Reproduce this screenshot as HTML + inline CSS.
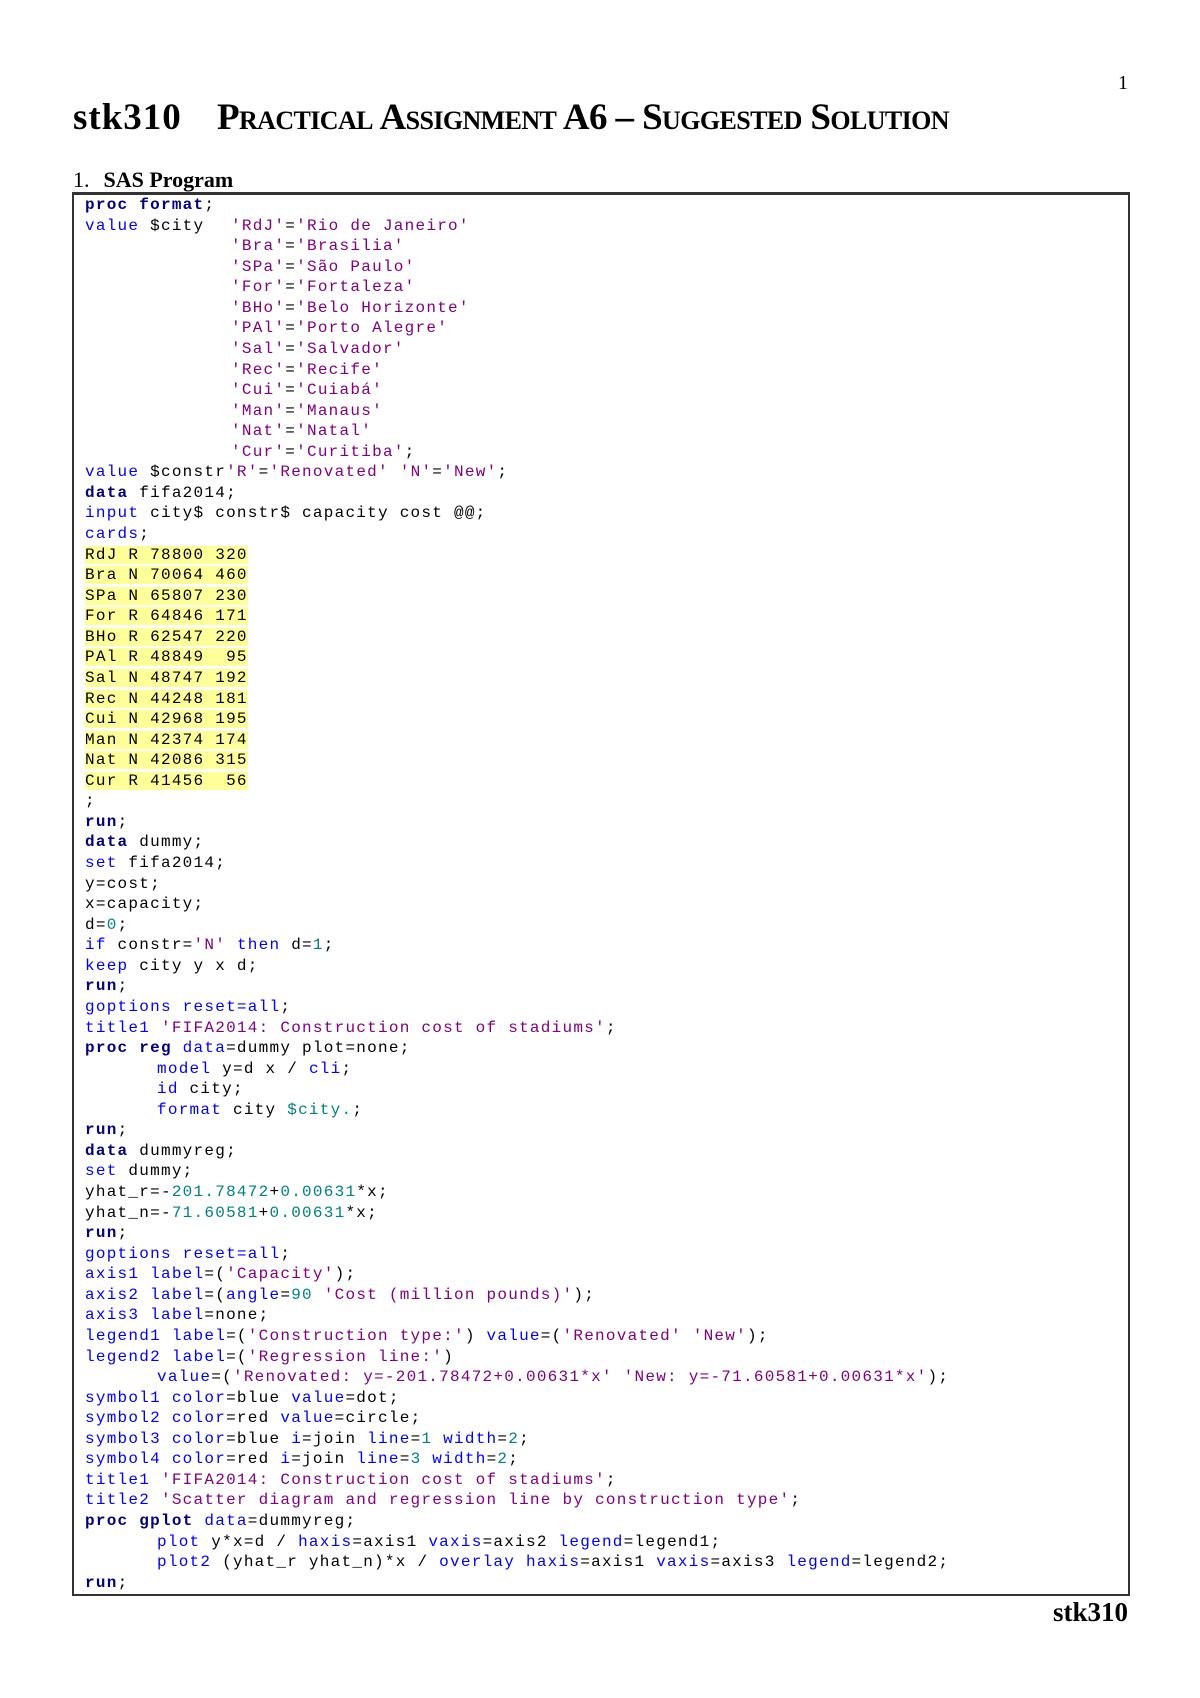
<!DOCTYPE html>
<html><head><meta charset="utf-8"><style>
body{margin:0;background:#fff;width:1200px;height:1698px;position:relative;overflow:hidden;font-family:"Liberation Serif",serif;color:#000}
.pn{position:absolute;left:1118px;top:72px;font-size:20px}
.title{position:absolute;left:73px;top:96px;font-size:37px;font-weight:bold;white-space:nowrap}
.title .st{letter-spacing:1px}
.title .sc{font-variant:small-caps;position:absolute;left:144px;top:0;letter-spacing:-0.6px}
.h1{position:absolute;left:73px;top:167px;font-size:22px;font-weight:bold}
.h1 span{font-weight:normal;margin-right:14px}
.box{position:absolute;left:72px;top:192px;width:1054px;height:1399px;border:2px solid #333;border-top-width:3px}
pre{margin:0;position:absolute;left:11px;top:0;font-family:"Liberation Mono",monospace;font-size:16px;letter-spacing:1.25px;line-height:20.57px;color:#000}
.k{color:#000080;font-weight:bold}
.b{color:#0000ff}
.s{color:#800080}
.n{color:#008080}
.y{background:#ffff99}
.c{display:inline-block;width:146px}
.i{display:inline-block;width:72px}
.ft{position:absolute;right:72px;top:1597px;font-size:27px;font-weight:bold}
</style></head><body>
<div class="pn">1</div>
<div class="title"><span class="st">stk310</span><span class="sc">Practical Assignment A6 – Suggested Solution</span></div>
<div class="h1"><span>1.</span>SAS Program</div>
<div class="box"><pre><span class="k">proc format</span>;
<span class="c"><span class="b">value</span> $city</span><span class="s">'RdJ'</span>=<span class="s">'Rio de Janeiro'</span>
<span class="c"></span><span class="s">'Bra'</span>=<span class="s">'Brasilia'</span>
<span class="c"></span><span class="s">'SPa'</span>=<span class="s">'São Paulo'</span>
<span class="c"></span><span class="s">'For'</span>=<span class="s">'Fortaleza'</span>
<span class="c"></span><span class="s">'BHo'</span>=<span class="s">'Belo Horizonte'</span>
<span class="c"></span><span class="s">'PAl'</span>=<span class="s">'Porto Alegre'</span>
<span class="c"></span><span class="s">'Sal'</span>=<span class="s">'Salvador'</span>
<span class="c"></span><span class="s">'Rec'</span>=<span class="s">'Recife'</span>
<span class="c"></span><span class="s">'Cui'</span>=<span class="s">'Cuiabá'</span>
<span class="c"></span><span class="s">'Man'</span>=<span class="s">'Manaus'</span>
<span class="c"></span><span class="s">'Nat'</span>=<span class="s">'Natal'</span>
<span class="c"></span><span class="s">'Cur'</span>=<span class="s">'Curitiba'</span>;
<span class="b">value</span> $constr<span class="s">'R'</span>=<span class="s">'Renovated'</span> <span class="s">'N'</span>=<span class="s">'New'</span>;
<span class="k">data</span> fifa2014;
<span class="b">input</span> city$ constr$ capacity cost @@;
<span class="b">cards</span>;
<span class="y">RdJ R 78800 320</span>
<span class="y">Bra N 70064 460</span>
<span class="y">SPa N 65807 230</span>
<span class="y">For R 64846 171</span>
<span class="y">BHo R 62547 220</span>
<span class="y">PAl R 48849  95</span>
<span class="y">Sal N 48747 192</span>
<span class="y">Rec N 44248 181</span>
<span class="y">Cui N 42968 195</span>
<span class="y">Man N 42374 174</span>
<span class="y">Nat N 42086 315</span>
<span class="y">Cur R 41456  56</span>
;
<span class="k">run</span>;
<span class="k">data</span> dummy;
<span class="b">set</span> fifa2014;
y=cost;
x=capacity;
d=<span class="n">0</span>;
<span class="b">if</span> constr=<span class="s">'N'</span> <span class="b">then</span> d=<span class="n">1</span>;
<span class="b">keep</span> city y x d;
<span class="k">run</span>;
<span class="b">goptions reset=all</span>;
<span class="b">title1</span> <span class="s">'FIFA2014: Construction cost of stadiums'</span>;
<span class="k">proc reg</span> <span class="b">data</span>=dummy plot=none;
<span class="i"></span><span class="b">model</span> y=d x / <span class="b">cli</span>;
<span class="i"></span><span class="b">id</span> city;
<span class="i"></span><span class="b">format</span> city <span class="n">$city.</span>;
<span class="k">run</span>;
<span class="k">data</span> dummyreg;
<span class="b">set</span> dummy;
yhat_r=-<span class="n">201.78472</span>+<span class="n">0.00631</span>*x;
yhat_n=-<span class="n">71.60581</span>+<span class="n">0.00631</span>*x;
<span class="k">run</span>;
<span class="b">goptions reset=all</span>;
<span class="b">axis1 label</span>=(<span class="s">'Capacity'</span>);
<span class="b">axis2 label</span>=(<span class="b">angle</span>=<span class="n">90</span> <span class="s">'Cost (million pounds)'</span>);
<span class="b">axis3 label</span>=none;
<span class="b">legend1 label</span>=(<span class="s">'Construction type:'</span>) <span class="b">value</span>=(<span class="s">'Renovated'</span> <span class="s">'New'</span>);
<span class="b">legend2 label</span>=(<span class="s">'Regression line:'</span>)
<span class="i"></span><span class="b">value</span>=(<span class="s">'Renovated: y=-201.78472+0.00631*x'</span> <span class="s">'New: y=-71.60581+0.00631*x'</span>);
<span class="b">symbol1 color</span>=blue <span class="b">value</span>=dot;
<span class="b">symbol2 color</span>=red <span class="b">value</span>=circle;
<span class="b">symbol3 color</span>=blue <span class="b">i</span>=join <span class="b">line</span>=<span class="n">1</span> <span class="b">width</span>=<span class="n">2</span>;
<span class="b">symbol4 color</span>=red <span class="b">i</span>=join <span class="b">line</span>=<span class="n">3</span> <span class="b">width</span>=<span class="n">2</span>;
<span class="b">title1</span> <span class="s">'FIFA2014: Construction cost of stadiums'</span>;
<span class="b">title2</span> <span class="s">'Scatter diagram and regression line by construction type'</span>;
<span class="k">proc gplot</span> <span class="b">data</span>=dummyreg;
<span class="i"></span><span class="b">plot</span> y*x=d / <span class="b">haxis</span>=axis1 <span class="b">vaxis</span>=axis2 <span class="b">legend</span>=legend1;
<span class="i"></span><span class="b">plot2</span> (yhat_r yhat_n)*x / <span class="b">overlay haxis</span>=axis1 <span class="b">vaxis</span>=axis3 <span class="b">legend</span>=legend2;
<span class="k">run</span>;</pre></div>
<div class="ft">stk310</div>
</body></html>
